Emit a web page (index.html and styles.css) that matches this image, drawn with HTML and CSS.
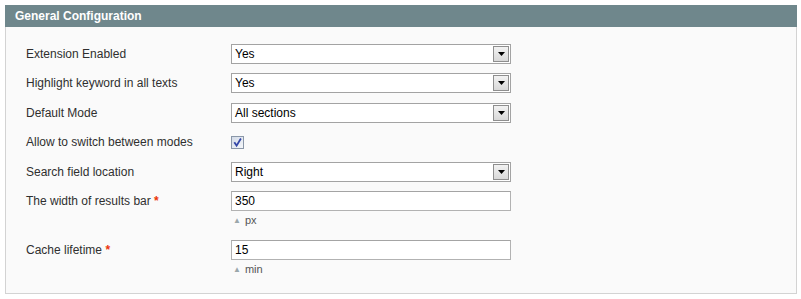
FILE: index.html
```html
<!DOCTYPE html>
<html>
<head>
<meta charset="utf-8">
<link rel="stylesheet" href="styles.css">
</head>
<body>
<div class="panel">
  <div class="head">General Configuration</div>
  <div class="body">
    <div class="row">
      <div class="label">Extension Enabled</div>
      <div class="value"><div class="select"><span class="sel-text">Yes</span><span class="arrow"><svg width="7" height="4" viewBox="0 0 7 4"><path d="M0 0H7L3.5 4Z" fill="#000"/></svg></span></div></div>
    </div>
    <div class="row">
      <div class="label">Highlight keyword in all texts</div>
      <div class="value"><div class="select"><span class="sel-text">Yes</span><span class="arrow"><svg width="7" height="4" viewBox="0 0 7 4"><path d="M0 0H7L3.5 4Z" fill="#000"/></svg></span></div></div>
    </div>
    <div class="row">
      <div class="label">Default Mode</div>
      <div class="value"><div class="select"><span class="sel-text">All sections</span><span class="arrow"><svg width="7" height="4" viewBox="0 0 7 4"><path d="M0 0H7L3.5 4Z" fill="#000"/></svg></span></div></div>
    </div>
    <div class="row">
      <div class="label">Allow to switch between modes</div>
      <div class="value"><span class="checkbox"><svg width="11" height="11" viewBox="0 0 11 11"><path d="M2.3 5.2L4.6 8.6L8.9 1.5" fill="none" stroke="#3447a8" stroke-width="1.8"/></svg></span></div>
    </div>
    <div class="row">
      <div class="label">Search field location</div>
      <div class="value"><div class="select"><span class="sel-text">Right</span><span class="arrow"><svg width="7" height="4" viewBox="0 0 7 4"><path d="M0 0H7L3.5 4Z" fill="#000"/></svg></span></div></div>
    </div>
    <div class="row row-note">
      <div class="label">The width of results bar <span class="req">*</span></div>
      <div class="value"><div class="input">350</div><div class="note"><span class="tri">&#9650;</span>px</div></div>
    </div>
    <div class="row row-note">
      <div class="label">Cache lifetime <span class="req">*</span></div>
      <div class="value"><div class="input">15</div><div class="note"><span class="tri">&#9650;</span>min</div></div>
    </div>
  </div>
</div>
</body>
</html>
```
FILE: styles.css
```css
html, body {
  margin: 0;
  padding: 0;
  background: #ffffff;
}
body {
  font-family: "Liberation Sans", Arial, sans-serif;
  font-size: 12px;
  color: #2f2f2f;
  padding: 5px 4px 0 5px;
}
.panel {
  width: 790px;
  border: 1px solid #d3d3d3;
  border-top: 0;
  background: #fafafa;
}
.head {
  height: 22px;
  line-height: 22px;
  background: #6f878c;
  color: #ffffff;
  font-weight: bold;
  font-size: 12px;
  padding-left: 10px;
  margin: 0 -1px;
}
.body {
  padding: 12px 0 17px 20px;
}
.row {
  display: grid;
  grid-template-columns: 205px 280px;
  padding: 5px 0 4.4px;
  align-items: start;
}
.row-note {
  padding-bottom: 8px;
}
.row-note:last-child {
  padding-bottom: 0;
}
.label {
  line-height: 19px;
  padding-top: 1px;
}
.req {
  color: #eb340a;
  font-weight: bold;
}
.select {
  height: 18px;
  border: 1px solid #a3a3a3;
  background: #ffffff;
  display: flex;
  align-items: center;
  justify-content: space-between;
  width: 278px;
}
.sel-text {
  padding-left: 3px;
  font-size: 12px;
  color: #000;
}
.arrow {
  width: 16px;
  height: 16px;
  margin-right: 1px;
  border: 1px solid #8e8e8e;
  background: linear-gradient(#f2f2f2, #d8d8d8);
  display: flex;
  align-items: center;
  justify-content: center;
  box-sizing: border-box;
}
.input {
  width: 275px;
  height: 18px;
  line-height: 18px;
  border: 1px solid #b2b2b2;
  border-top-color: #a4a4a4;
  background: #ffffff;
  padding-left: 3px;
  color: #000;
}
.checkbox {
  display: flex;
  align-items: center;
  justify-content: center;
  width: 13px;
  height: 13px;
  box-sizing: border-box;
  margin-top: 4px;
  border: 1px solid #8a97a8;
  background: linear-gradient(135deg, #d3dbe8, #f5f7fa);
}
.note {
  font-size: 11px;
  color: #555;
  line-height: 13px;
  margin-top: 3px;
  padding-left: 2px;
}
.tri {
  color: #9aa7ab;
  font-size: 8px;
  margin-right: 4px;
  vertical-align: 1px;
}
```
